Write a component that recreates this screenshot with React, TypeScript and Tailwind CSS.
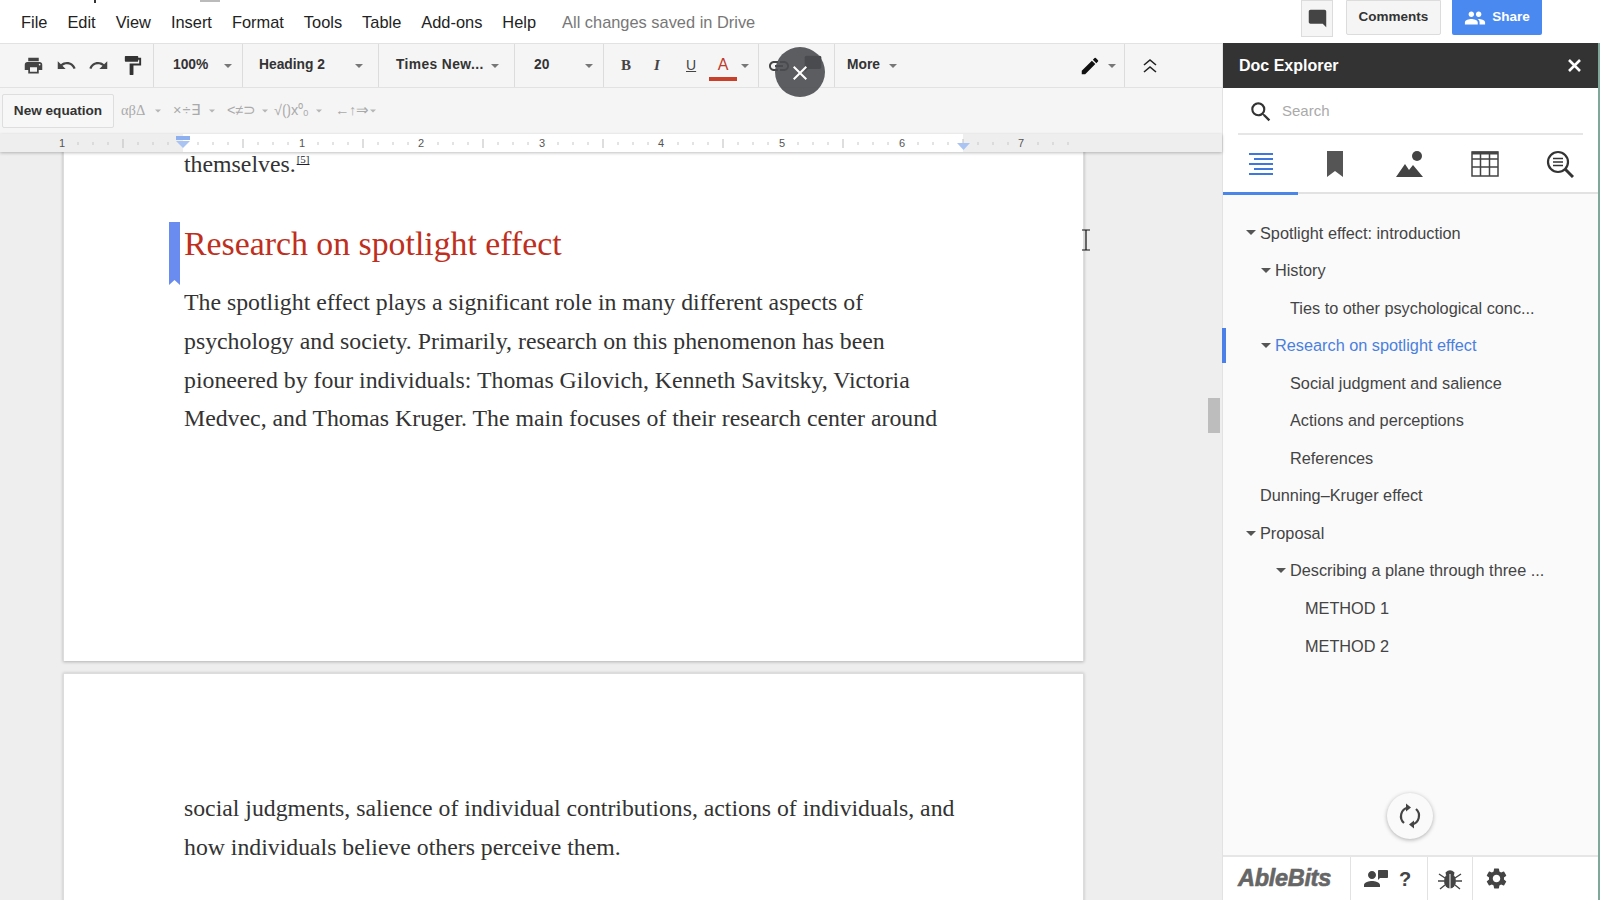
import React from "react";
import { MdPrint, MdUndo, MdRedo, MdFormatPaint, MdSearch, MdChatBubble, MdLink, MdEdit, MdPerson, MdPeople, MdSettings, MdClose, MdModeComment } from "react-icons/md";

const Caret = ({ c = "" }: { c?: string }) => (
  <span className={"inline-block w-0 h-0 border-x-[4px] border-x-transparent border-t-[4px] border-t-[#777] " + c} />
);

const Group = ({ w, children, last }: { w: string; children?: React.ReactNode; last?: boolean }) => (
  <div className={w + " h-full flex items-center shrink-0 " + (last ? "" : "border-r border-[#dcdcdc]")}>{children}</div>
);

const Drop = ({ label, w, pad }: { label: string; w: string; pad: string }) => (
  <Group w={w}>
    <div className={"flex-1 flex items-center justify-between text-[13.8px] font-bold text-[#333] [font-family:'Liberation_Sans',sans-serif] " + pad}>
      <span>{label}</span>
      <Caret />
    </div>
  </Group>
);

function Ruler() {
  const ticks: React.ReactNode[] = [];
  for (let i = 0; i * 15 < 1020; i++) {
    const x = 63 + i * 15;
    const major = i % 8 === 4;
    const num = i % 8 === 0;
    if (num) continue;
    ticks.push(<line key={i} x1={x} x2={x} y1={major ? 5 : 8} y2={major ? 14 : 11} stroke={major ? "#bdbdbd" : "#c8c8c8"} />);
  }
  const nums = [["1", 62], ["1", 302], ["2", 421], ["3", 542], ["4", 661], ["5", 782], ["6", 902], ["7", 1021]] as const;
  return (
    <div className="h-[18px] shrink-0 bg-[#eeeeee] shadow-[0_1px_3px_rgba(0,0,0,0.25)] relative z-10">
      <svg width="1222" height="18" className="block">
        <rect x="183" y="0" width="780" height="18" fill="#ffffff" />
        {ticks}
        {nums.map(([n, x], i) => (
          <text key={i} x={x} y="13" fontSize="11" textAnchor="middle" fill="#555" fontFamily="Liberation Sans, sans-serif">{n}</text>
        ))}
        <rect x="176" y="2" width="14" height="4" fill="#8fb0ee" />
        <path d="M176 7h14l-7 7z" fill="#a9c4f2" />
        <path d="M957 9h13l-6.5 7z" fill="#a9c4f2" />
      </svg>
    </div>
  );
}

const rows: { t: string; l: number; arrow?: boolean; active?: boolean }[] = [
  { t: "Spotlight effect: introduction", l: 0, arrow: true },
  { t: "History", l: 1, arrow: true },
  { t: "Ties to other psychological conc...", l: 2 },
  { t: "Research on spotlight effect", l: 1, arrow: true, active: true },
  { t: "Social judgment and salience", l: 2 },
  { t: "Actions and perceptions", l: 2 },
  { t: "References", l: 2 },
  { t: "Dunning–Kruger effect", l: 0 },
  { t: "Proposal", l: 0, arrow: true },
  { t: "Describing a plane through three ...", l: 2, arrow: true },
  { t: "METHOD 1", l: 3 },
  { t: "METHOD 2", l: 3 },
];
const indent = ["pl-[37px]", "pl-[52px]", "pl-[67px]", "pl-[82px]"];

export default function App() {
  const serif = "[font-family:'Liberation_Serif',serif]";
  const eqCaret = "scale-75 opacity-50";
  return (
    <div className="w-[1600px] h-[900px] overflow-hidden bg-white flex flex-col relative [font-family:'Liberation_Sans',sans-serif]">
      {/* clipped title remnants */}
      <div className="absolute left-[200px] top-0 w-[20px] h-[2px] bg-[#bbb]" />
      <div className="absolute left-[94px] top-0 w-[2px] h-[3px] bg-[#333]" />

      {/* menu */}
      <div className="h-[43px] shrink-0 flex items-start">
        <div className="flex items-center h-[44px] pl-[21px] gap-[20px] text-[16.4px] text-[#222]">
          <span>File</span><span>Edit</span><span>View</span><span>Insert</span><span>Format</span><span>Tools</span><span>Table</span><span>Add-ons</span><span>Help</span>
          <span className="ml-[6px] text-[#777]">All changes saved in Drive</span>
        </div>
        <div className="ml-auto flex items-start mr-[58px]">
          <div className="w-[32px] h-[37px] bg-[#f5f5f5] border border-[#dcdcdc] flex items-center justify-center">
            <MdModeComment className="text-[#444] text-[21px]" />
          </div>
          <div className="ml-[13px] w-[95px] h-[35px] bg-[#f5f5f5] border border-[#dcdcdc] rounded-b-[2px] flex items-center justify-center text-[13.5px] font-bold text-[#333]">Comments</div>
          <div className="ml-[11px] w-[90px] h-[35px] bg-[#4a8af0] rounded-b-[2px] flex items-center justify-center gap-[6px] text-[13.5px] font-bold text-white">
            <MdPeople className="text-[22px]" />Share
          </div>
        </div>
      </div>

      <div className="flex-1 flex min-h-0">
        {/* left column */}
        <div className="w-[1222px] shrink-0 flex flex-col min-w-0">
          <div className="h-[45px] shrink-0 flex bg-[#f5f5f5] border-t border-b border-[#e2e2e2] text-[#444]">
            <Group w="w-[154px]">
              <div className="flex items-center pl-[23px] gap-[11.5px] text-[21px] text-[#444]">
                <MdPrint /><MdUndo /><MdRedo /><MdFormatPaint className="text-[23px] text-[#333]" />
              </div>
            </Group>
            <Drop label="100%" w="w-[89px]" pad="pl-[19px] pr-[10px]" />
            <Drop label="Heading 2" w="w-[136px]" pad="pl-[16px] pr-[15px]" />
            <Drop label="Times New..." w="w-[136px]" pad="pl-[17px] pr-[15px] tracking-[0.4px]" />
            <Drop label="20" w="w-[89px]" pad="pl-[19px] pr-[10px]" />
            <Group w="w-[155px]">
              <div className="flex items-center pl-[17px] text-[15px] text-[#444] [font-family:'Liberation_Serif',serif]">
                <span className="w-[33px] font-bold">B</span>
                <span className="w-[32px] italic font-bold">I</span>
                <span className="w-[23px] underline font-['Liberation_Sans'] text-[14px]">U</span>
                <span className="relative w-[28px] h-[30px] flex justify-center text-[#c0392b] text-[16px] font-['Liberation_Sans'] pt-[2px]">
                  A<span className="absolute left-0 bottom-0 w-[28px] h-[4px] bg-[#c8402a]" />
                </span>
                <Caret c="ml-[4px]" />
              </div>
            </Group>
            <Group w="w-[76px]">
              <div className="flex items-center pl-[8px] gap-[12px] text-[24px] text-[#444]">
                <MdLink /><MdChatBubble className="text-[20px] -mt-[4px]" />
              </div>
            </Group>
            <Group w="w-[290px]">
              <div className="flex items-center w-full pl-[12px] pr-[8px] text-[13.8px] font-bold text-[#333]">
                <span>More</span><Caret c="ml-[9px]" />
                <MdEdit className="ml-auto text-[22px] text-[#111]" /><Caret c="ml-[7px]" />
              </div>
            </Group>
            <Group w="w-[97px]" last>
              <svg width="14" height="16" viewBox="0 0 14 16" className="ml-[18px]" fill="none" stroke="#222" strokeWidth="1.6">
                <path d="M1 7l6-5 6 5M1 14l6-5 6 5" />
              </svg>
            </Group>
          </div>

          <div className="h-[46px] shrink-0 bg-[#f5f5f5] flex items-center pl-[2px] text-[#aaa] text-[14.5px]">
            <div className="w-[112px] h-[34px] bg-[#f7f7f7] border border-[#dedede] rounded-[2px] flex items-center justify-center text-[13.6px] font-bold text-[#333]">New equation</div>
            <div className="flex items-center ml-[7px] whitespace-nowrap">
              <span className={"w-[28px] " + serif}>αβΔ</span><Caret c={"ml-[5px] mr-[11px] " + eqCaret} />
              <span className="w-[29px] tracking-[1px]">×÷∃</span><Caret c={"ml-[6px] mr-[11px] " + eqCaret} />
              <span className="w-[29px]">&lt;≠⊃</span><Caret c={"ml-[5px] mr-[5px] " + eqCaret} />
              <span className="w-[36px] tracking-[-0.3px]">√⟮⟯x⁰₀</span><Caret c={"ml-[5px] mr-[12px] " + eqCaret} />
              <span className="w-[29px] tracking-[-0.5px]">←↑⇒</span><Caret c={"ml-[5px] " + eqCaret} />
            </div>
          </div>

          <Ruler />

          {/* document */}
          <div className="flex-1 min-h-0 overflow-hidden bg-[#eeeeee] relative">
            <div className={"ml-[63px] w-[1021px] h-[516px] bg-white border-x border-[#dcdcdc] shadow-[0_1px_3px_rgba(0,0,0,0.25)] pl-[120px] relative " + serif}>
              <div className="text-[23.8px] leading-[39px] -mt-[7px] text-[#333]">
                themselves.<sup className="text-[11px] underline text-[#223] ml-[1px] -top-[9px]">[5]</sup>
              </div>
              <div className="absolute left-[105px] top-[77px] w-[11px] h-[63px] bg-[#6a8cf0] [clip-path:polygon(0_0,100%_0,100%_100%,50%_92%,0_100%)]" />
              <h2 className="mt-[40px] text-[33.8px] leading-[40px] text-[#bf2f20]">Research on spotlight effect</h2>
              <p className="mt-[19px] text-[23.8px] leading-[38.8px] text-[#333] whitespace-nowrap">
                The spotlight effect plays a significant role in many different aspects of<br />
                psychology and society. Primarily, research on this phenomenon has been<br />
                pioneered by four individuals: Thomas Gilovich, Kenneth Savitsky, Victoria<br />
                Medvec, and Thomas Kruger. The main focuses of their research center around
              </p>
            </div>
            <div className={"mt-[12px] ml-[63px] w-[1021px] h-[300px] bg-white border-x border-t border-[#dcdcdc] shadow-[0_0_3px_rgba(0,0,0,0.2)] pl-[120px] pt-[115px] text-[23.75px] leading-[38.8px] text-[#333] whitespace-nowrap " + serif}>
              social judgments, salience of individual contributions, actions of individuals, and<br />
              how individuals believe others perceive them.
            </div>
            {/* scrollbar thumb */}
            <div className="absolute left-[1208px] top-[246px] w-[12px] h-[35px] bg-[#bdbdbd]" />
            {/* I-beam cursor */}
            <svg className="absolute left-[1080px] top-[77px]" width="12" height="22" viewBox="0 0 12 22" fill="none" stroke="#111" strokeWidth="1.2">
              <path d="M2 1h8M6 1v20M2 21h8" />
            </svg>
          </div>
        </div>

        {/* side panel */}
        <div className="w-[376px] shrink-0 flex flex-col bg-[#fafafa] border-l border-[#e2e2e2] relative">
          <div className="h-[45px] shrink-0 bg-[#333333] flex items-center justify-between pl-[16px] pr-[17px] text-white">
            <span className="text-[16px] font-bold">Doc Explorer</span>
            <svg width="13" height="13" viewBox="0 0 13 13" stroke="#fff" strokeWidth="2.6"><path d="M1 1l11 11M12 1L1 12" /></svg>
          </div>
          <div className="bg-white shrink-0 px-[15px]">
            <div className="h-[47px] flex items-center gap-[8px] pl-[10px] pt-[2px] border-b-2 border-[#e6e6e6]">
              <MdSearch className="text-[26px] text-[#333]" />
              <span className="text-[15px] text-[#aaa]">Search</span>
            </div>
          </div>
          <div className="h-[59px] shrink-0 bg-white border-b-2 border-[#e2e2e2] flex relative">
            <div className="w-[75px] h-full flex items-center justify-center border-b-[3px] border-[#4a86e8] -mb-[2px] box-content">
              <svg width="26" height="26" viewBox="0 0 26 26" stroke="#3f78dc" strokeWidth="2">
                <path d="M1 3h24M6 8h19M1 13h24M6 18h19M1 23h24" />
              </svg>
            </div>
            <div className="w-[74px] flex items-center justify-center">
              <svg width="16" height="26" viewBox="0 0 16 26" fill="#555"><path d="M0 0h16v26l-8-6-8 6z" /></svg>
            </div>
            <div className="w-[74px] flex items-center justify-center pl-[2px]">
              <svg width="28" height="26" viewBox="0 0 28 26" fill="#444"><circle cx="21" cy="5" r="5" /><path d="M0 26l9-13 4 6 4-5 10 12z" /></svg>
            </div>
            <div className="w-[74px] flex items-center justify-center pl-[4px]">
              <svg width="28" height="26" viewBox="0 0 28 26" fill="none" stroke="#444" strokeWidth="1.5">
                <rect x="1" y="1" width="26" height="24" /><path d="M1 8h26M1 16h26M9.5 1v24M18.500 1v24" /><path d="M1 2h26" strokeWidth="3" />
              </svg>
            </div>
            <div className="w-[74px] flex items-center justify-center pl-[6px]">
              <svg width="28" height="28" viewBox="0 0 28 28" fill="none" stroke="#333" strokeWidth="2.2">
                <circle cx="12" cy="12" r="10" /><path d="M19 19l8 8" strokeWidth="3" /><path d="M7 8.5h10M7 12h10M7 15.500h10" strokeWidth="1.6" />
              </svg>
            </div>
          </div>

          <div className="flex-1 pt-[20px] text-[16.3px] text-[#444]">
            {rows.map((r) => (
              <div key={r.t} className={"h-[37.55px] flex items-center relative whitespace-nowrap " + indent[r.l] + (r.active ? " text-[#4a7fe0]" : "")}>
                {r.active && <span className="absolute left-[-1px] top-[1px] w-[4px] h-[35px] bg-[#4a80e8]" />}
                {r.arrow && <span className="absolute -ml-[14px] w-0 h-0 border-x-[5px] border-x-transparent border-t-[5px] border-t-[#555]" />}
                {r.t}
              </div>
            ))}
          </div>

          <div className="absolute left-[164px] top-[750px] w-[46px] h-[46px] rounded-full bg-[#fafafa] shadow-[0_1px_4px_rgba(0,0,0,0.3)] flex items-center justify-center">
            <svg width="24" height="26" viewBox="0 0 24 26" fill="none" stroke="#444" strokeWidth="2.2">
              <path d="M10 4.500A9 9 0 0 0 6 20" />
              <path d="M14 21.500A9 9 0 0 0 18 6" />
              <path d="M8 0.500l5 4-5 4z" fill="#444" stroke="none" />
              <path d="M16 25.500l-5-4 5-4z" fill="#444" stroke="none" />
            </svg>
          </div>

          <div className="h-[45px] shrink-0 bg-white border-t-2 border-[#e6e6e6] flex text-[#555]">
            <div className="w-[128px] flex items-center pl-[15px] border-r border-[#e2e2e2] text-[23.5px] font-bold italic tracking-[-0.3px] text-[#666] [-webkit-text-stroke:0.6px_#666]">AbleBits</div>
            <div className="w-[77px] flex items-center border-r border-[#e2e2e2] pl-[10px] relative">
              <MdPerson className="text-[24px] text-[#444] -ml-[1px]" />
              <MdChatBubble className="text-[12px] text-[#444] -ml-[7px] -mt-[8px]" />
              <span className="ml-[10px] text-[20px] font-bold text-[#444]">?</span>
            </div>
            <div className="w-[45px] flex items-center justify-center border-r border-[#e2e2e2]">
              <svg width="24" height="22" viewBox="0 0 24 22" fill="#444" stroke="#444">
                <ellipse cx="12" cy="13" rx="6" ry="7.500" stroke="none" />
                <path d="M7.500 4.500Q12 0 16.500 4.500L16 7H8z" stroke="none" />
                <path d="M1 6l6 4M23 6l-6 4M0 13h6M24 13h-6M2 21l5-4M22 21l-5-4" strokeWidth="1.400" fill="none" />
                <path d="M12 6v15" stroke="#fff" strokeWidth="1" />
              </svg>
            </div>
            <div className="pl-[11px] flex items-center"><MdSettings className="text-[25px] text-[#444]" /></div>
          </div>
        </div>
        <div className="w-[2px] shrink-0 bg-[#7fa89a]" />
      </div>

      {/* overlay close dot */}
      <div className="absolute left-[775px] top-[47px] w-[50px] h-[50px] rounded-full bg-[#4a4d50]/90 flex items-center justify-center text-white">
        <MdClose className="text-[24px] mt-[2px]" />
      </div>
    </div>
  );
}
